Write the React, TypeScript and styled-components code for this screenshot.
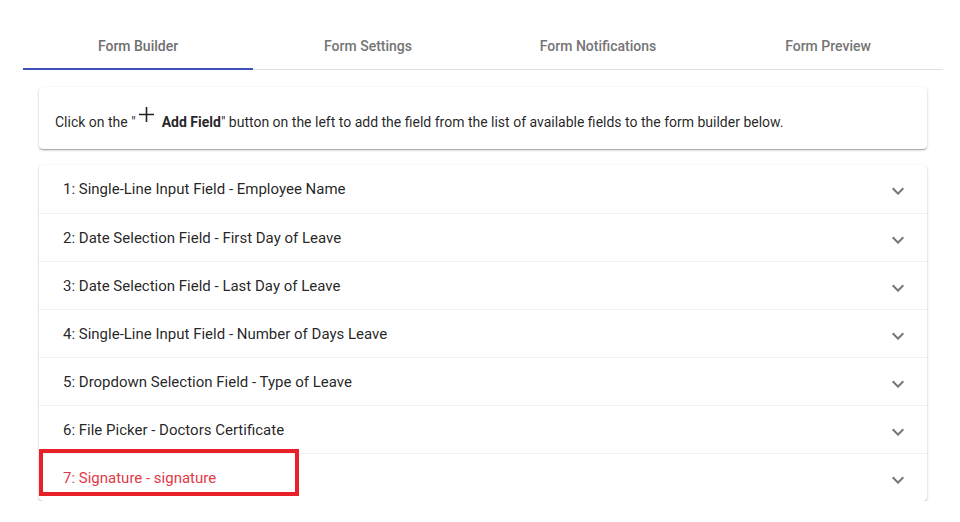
import React from 'react';
import styled, { createGlobalStyle } from 'styled-components';

const GlobalStyle = createGlobalStyle`
  body {
    margin: 0;
    background: #ffffff;
    font-family: Roboto, "Liberation Sans", sans-serif;
  }
`;

const Page = styled.div`
  padding: 22px 17px 0 23px;
`;

const TabBar = styled.div`
  display: flex;
  border-bottom: 1px solid #e0e0e0;
`;

const Tab = styled.div<{ active?: boolean }>`
  flex: 1;
  height: 47px;
  display: flex;
  align-items: center;
  justify-content: center;
  font-size: 14px;
  font-weight: 500;
  color: ${(p) => (p.active ? '#6f6f6f' : '#757575')};
  box-shadow: ${(p) => (p.active ? 'inset 0 -2px 0 #3f51b5' : 'none')};
  margin-bottom: -1px;
  padding-bottom: 1px;
`;

const Panel = styled.div`
  padding: 17px 16px 0;
  display: flex;
  flex-direction: column;
  gap: 16px;
`;

const InfoCard = styled.div`
  background: #fff;
  border-radius: 4px;
  box-shadow: 0 1px 3px rgba(0, 0, 0, 0.2), 0 1px 1px rgba(0, 0, 0, 0.14),
    0 2px 1px -1px rgba(0, 0, 0, 0.12);
  height: 62px;
  box-sizing: border-box;
  display: flex;
  align-items: flex-end;
  padding: 0 16px 19px;
  font-size: 14px;
  color: rgba(0, 0, 0, 0.87);
`;

const PlusIcon = styled.svg`
  width: 17px;
  height: 17px;
  vertical-align: 4px;
  margin: 0 7px 0 2px;
`;

const Bold = styled.b`
  font-weight: 700;
`;

const List = styled.div`
  background: #fff;
  border-radius: 4px;
  box-shadow: 0 1px 3px rgba(0, 0, 0, 0.2), 0 1px 1px rgba(0, 0, 0, 0.14),
    0 2px 1px -1px rgba(0, 0, 0, 0.12);
`;

const Row = styled.div<{ highlight?: boolean }>`
  position: relative;
  height: 48px;
  box-sizing: border-box;
  display: flex;
  align-items: center;
  padding: 0 17px 0 24px;
  font-size: 15px;
  color: ${(p) => (p.highlight ? '#e23a48' : 'rgba(0, 0, 0, 0.87)')};
  & + & {
    border-top: 1px solid #f1f1f1;
  }
`;

const Label = styled.span`
  flex: 1;
`;

const Chevron = styled.svg`
  width: 24px;
  height: 24px;
  margin-top: 4px;
  fill: #757575;
`;

const Highlight = styled.div`
  position: absolute;
  left: 0;
  top: -5px;
  width: 260px;
  height: 47px;
  box-sizing: border-box;
  border: 4px solid #e8202a;
`;

const tabs = ['Form Builder', 'Form Settings', 'Form Notifications', 'Form Preview'];

const fields = [
  '1: Single-Line Input Field - Employee Name',
  '2: Date Selection Field - First Day of Leave',
  '3: Date Selection Field - Last Day of Leave',
  '4: Single-Line Input Field - Number of Days Leave',
  '5: Dropdown Selection Field - Type of Leave',
  '6: File Picker - Doctors Certificate',
  '7: Signature - signature',
];

export default function App() {
  return (
    <>
      <GlobalStyle />
      <Page>
        <TabBar>
          {tabs.map((t, i) => (
            <Tab key={t} active={i === 0}>
              {t}
            </Tab>
          ))}
        </TabBar>
        <Panel>
          <InfoCard>
            <span>
              Click on the "
              <PlusIcon viewBox="0 0 17 17">
                <path d="M8.5 1v15M1 8.5h15" stroke="#222" strokeWidth="1.6" fill="none" />
              </PlusIcon>
              <Bold>Add Field</Bold>" button on the left to add the field from the list of
              available fields to the form builder below.
            </span>
          </InfoCard>
          <List>
            {fields.map((f, i) => {
              const last = i === fields.length - 1;
              return (
                <Row key={f} highlight={last}>
                  <Label>{f}</Label>
                  <Chevron viewBox="0 0 24 24">
                    <path d="M16.59 8.59 12 13.17 7.41 8.59 6 10l6 6 6-6z" />
                  </Chevron>
                  {last && <Highlight />}
                </Row>
              );
            })}
          </List>
        </Panel>
      </Page>
    </>
  );
}
